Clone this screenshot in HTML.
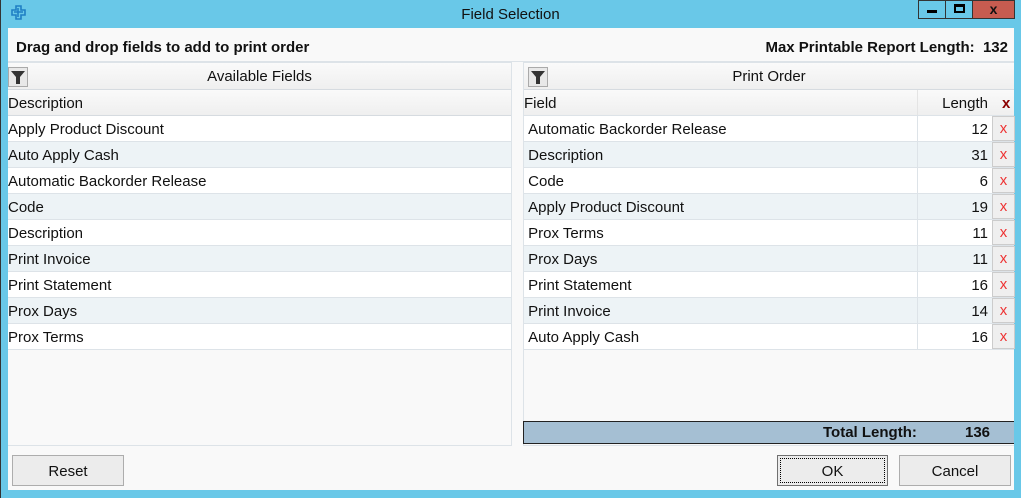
<!DOCTYPE html>
<html><head><style>
*{box-sizing:border-box;margin:0;padding:0}
body{width:1021px;height:498px;background:#69c8e8;font-family:"Liberation Sans",sans-serif;font-size:15px;color:#111;position:relative;overflow:hidden}
.a{position:absolute}
.content{left:8px;top:28px;width:1006px;height:462px;background:#f9f9f9}
.panel{background:#f9f9f9;border:1px solid #dde3e8}
.hdr{background:linear-gradient(#fafafa,#efefef);border-bottom:1px solid #d6dbe0}
.row{height:26px;line-height:27px;border-bottom:1px solid #dde3e8;white-space:nowrap;position:relative}
.row:nth-child(odd){background:#fff}
.row:nth-child(even){background:#edf3f6}
.filt{width:20px;height:20px;border:1px solid #aaa;background:#e8e8e8}
.btn{border:1px solid #adadad;background:#ececec;text-align:center;line-height:31px;font-size:15px}
.len{position:absolute;left:393px;width:75px;text-align:right;padding-right:4px;border-left:1px solid #dde3e8;top:0;height:25px}
.xb{position:absolute;left:468px;width:23px;top:0;height:25px;background:#efefef;border:1px solid #ccc;color:#e33;text-align:center;line-height:24px}
</style></head><body>
<div class="a" style="left:0;top:0;width:1px;height:498px;background:#333"></div>
<svg class="a" style="left:10px;top:5px" width="18" height="18" viewBox="0 0 18 18"><path d="M6 1h5v4h4v5h-4v4H6v-4H2V5h4z M8 3v9 M4 7h9" fill="none" stroke="#1f7fc4" stroke-width="1.6"/></svg>
<div class="a" style="left:0;width:1021px;top:6px;text-align:center;font-size:15px;color:#111">Field Selection</div>
<div class="a" style="left:918px;top:0;width:28px;height:19px;border:1px solid #333;background:#69c8e8"><div class="a" style="left:8px;top:9px;width:10px;height:3px;background:#000"></div></div>
<div class="a" style="left:945px;top:0;width:28px;height:19px;border:1px solid #333;background:#69c8e8"><div class="a" style="left:8px;top:3px;width:11px;height:9px;border:2px solid #000;border-top-width:3px"></div></div>
<div class="a" style="left:972px;top:0;width:43px;height:19px;border:1px solid #333;background:#c75c50;text-align:center;font-weight:bold;font-size:14px;line-height:16px">x</div>
<div class="a content"></div>
<div class="a" style="left:16px;top:39px;font-weight:bold">Drag and drop fields to add to print order</div>
<div class="a" style="right:13px;top:39px;font-weight:bold">Max Printable Report Length:&nbsp; 132</div>
<div class="a" style="left:8px;top:61px;width:1006px;height:1px;background:#dde3e8"></div>

<div class="a panel" style="left:8px;top:62px;width:504px;height:384px;border-left:none">
 <div class="hdr" style="height:27px;position:relative"><div class="a filt" style="left:0;top:4px"><svg width="18" height="18"><path d="M2 3h14l-5 6v7h-4V9z" fill="#333"/></svg></div><div style="text-align:center;line-height:28px">Available Fields</div></div>
 <div class="hdr" style="height:26px;line-height:27px;padding-left:0">Description</div>
 <div>
 <div class="row">Apply Product Discount</div><div class="row">Auto Apply Cash</div><div class="row">Automatic Backorder Release</div><div class="row">Code</div><div class="row">Description</div><div class="row">Print Invoice</div><div class="row">Print Statement</div><div class="row">Prox Days</div><div class="row">Prox Terms</div>
 </div>
</div>

<div class="a panel" style="left:523px;top:62px;width:491px;height:384px;border-right:none">
 <div class="hdr" style="height:27px;position:relative"><div class="a filt" style="left:4px;top:4px"><svg width="18" height="18"><path d="M2 3h14l-5 6v7h-4V9z" fill="#333"/></svg></div><div style="text-align:center;line-height:28px">Print Order</div></div>
 <div class="hdr row" style="height:26px;background:linear-gradient(#fafafa,#efefef)">Field<span class="len" style="border-left:1px solid #e4e4e4">Length</span><span class="a" style="left:478px;color:#8b0000;font-weight:bold">x</span></div>
 <div style="padding-left:0">
 <div class="row">&nbsp;Automatic Backorder Release<span class="len">12</span><span class="xb">x</span></div>
 <div class="row">&nbsp;Description<span class="len">31</span><span class="xb">x</span></div>
 <div class="row">&nbsp;Code<span class="len">6</span><span class="xb">x</span></div>
 <div class="row">&nbsp;Apply Product Discount<span class="len">19</span><span class="xb">x</span></div>
 <div class="row">&nbsp;Prox Terms<span class="len">11</span><span class="xb">x</span></div>
 <div class="row">&nbsp;Prox Days<span class="len">11</span><span class="xb">x</span></div>
 <div class="row">&nbsp;Print Statement<span class="len">16</span><span class="xb">x</span></div>
 <div class="row">&nbsp;Print Invoice<span class="len">14</span><span class="xb">x</span></div>
 <div class="row">&nbsp;Auto Apply Cash<span class="len">16</span><span class="xb">x</span></div>
 </div>
</div>
<div class="a" style="left:523px;top:421px;width:491px;height:23px;background:#a5bfd3;border:1px solid #222;border-right:none;font-weight:bold;line-height:22px"><span class="a" style="left:299px">Total Length:</span><span class="a" style="left:441px">136</span></div>

<div class="a btn" style="left:12px;top:455px;width:112px;height:31px">Reset</div>
<div class="a btn" style="left:777px;top:455px;width:111px;height:31px;border:1px solid #707070;outline:1px dotted #000;outline-offset:-4px">OK</div>
<div class="a btn" style="left:899px;top:455px;width:112px;height:31px">Cancel</div>
</body></html>
